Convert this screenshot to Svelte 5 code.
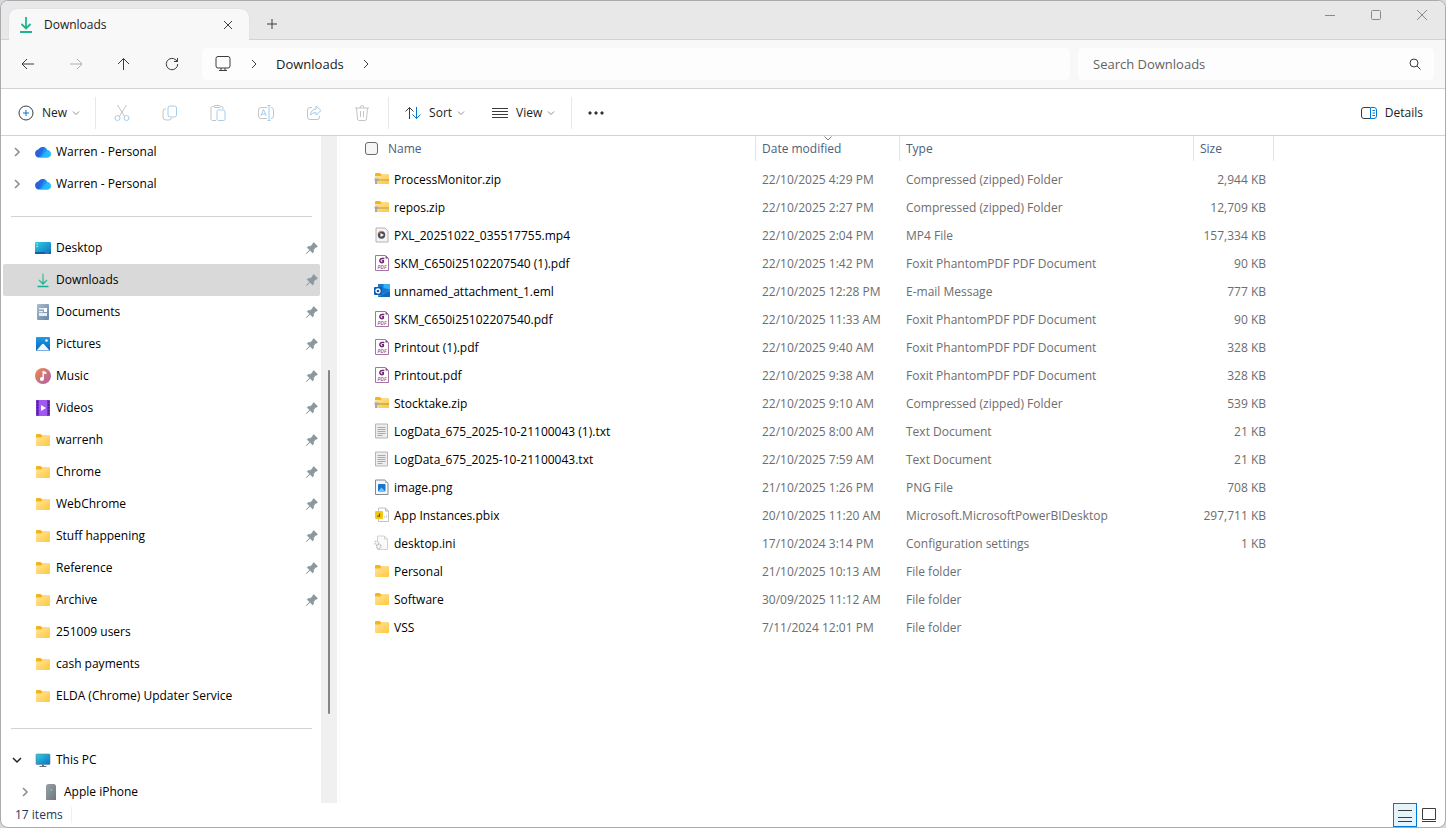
<script lang="ts">
	type Place = { label: string; icon: string; pinned?: boolean };

	const accounts: Place[] = [
		{ label: 'Warren - Personal', icon: 'cloud' },
		{ label: 'Warren - Personal', icon: 'cloud' }
	];

	const places: Place[] = [
		{ label: 'Desktop', icon: 'desktop', pinned: true },
		{ label: 'Downloads', icon: 'download', pinned: true },
		{ label: 'Documents', icon: 'documents', pinned: true },
		{ label: 'Pictures', icon: 'pictures', pinned: true },
		{ label: 'Music', icon: 'music', pinned: true },
		{ label: 'Videos', icon: 'videos', pinned: true },
		{ label: 'warrenh', icon: 'folder', pinned: true },
		{ label: 'Chrome', icon: 'folder', pinned: true },
		{ label: 'WebChrome', icon: 'folder', pinned: true },
		{ label: 'Stuff happening', icon: 'folder', pinned: true },
		{ label: 'Reference', icon: 'folder', pinned: true },
		{ label: 'Archive', icon: 'folder', pinned: true },
		{ label: '251009 users', icon: 'folder' },
		{ label: 'cash payments', icon: 'folder' },
		{ label: 'ELDA (Chrome) Updater Service', icon: 'folder' }
	];

	const pdf = 'Foxit PhantomPDF PDF Document';
	const zip = 'Compressed (zipped) Folder';

	const files = [
		{ name: 'ProcessMonitor.zip', icon: 'zip', date: '22/10/2025 4:29 PM', type: zip, size: '2,944 KB' },
		{ name: 'repos.zip', icon: 'zip', date: '22/10/2025 2:27 PM', type: zip, size: '12,709 KB' },
		{ name: 'PXL_20251022_035517755.mp4', icon: 'mp4', date: '22/10/2025 2:04 PM', type: 'MP4 File', size: '157,334 KB' },
		{ name: 'SKM_C650i25102207540 (1).pdf', icon: 'pdf', date: '22/10/2025 1:42 PM', type: pdf, size: '90 KB' },
		{ name: 'unnamed_attachment_1.eml', icon: 'eml', date: '22/10/2025 12:28 PM', type: 'E-mail Message', size: '777 KB' },
		{ name: 'SKM_C650i25102207540.pdf', icon: 'pdf', date: '22/10/2025 11:33 AM', type: pdf, size: '90 KB' },
		{ name: 'Printout (1).pdf', icon: 'pdf', date: '22/10/2025 9:40 AM', type: pdf, size: '328 KB' },
		{ name: 'Printout.pdf', icon: 'pdf', date: '22/10/2025 9:38 AM', type: pdf, size: '328 KB' },
		{ name: 'Stocktake.zip', icon: 'zip', date: '22/10/2025 9:10 AM', type: zip, size: '539 KB' },
		{ name: 'LogData_675_2025-10-21100043 (1).txt', icon: 'txt', date: '22/10/2025 8:00 AM', type: 'Text Document', size: '21 KB' },
		{ name: 'LogData_675_2025-10-21100043.txt', icon: 'txt', date: '22/10/2025 7:59 AM', type: 'Text Document', size: '21 KB' },
		{ name: 'image.png', icon: 'png', date: '21/10/2025 1:26 PM', type: 'PNG File', size: '708 KB' },
		{ name: 'App Instances.pbix', icon: 'pbix', date: '20/10/2025 11:20 AM', type: 'Microsoft.MicrosoftPowerBIDesktop', size: '297,711 KB' },
		{ name: 'desktop.ini', icon: 'ini', date: '17/10/2024 3:14 PM', type: 'Configuration settings', size: '1 KB' },
		{ name: 'Personal', icon: 'folder', date: '21/10/2025 10:13 AM', type: 'File folder', size: '' },
		{ name: 'Software', icon: 'folder', date: '30/09/2025 11:12 AM', type: 'File folder', size: '' },
		{ name: 'VSS', icon: 'folder', date: '7/11/2024 12:01 PM', type: 'File folder', size: '' }
	];

	let current = $state('Downloads');
	let search = $state('');
	let view = $state('details');
</script>

{#snippet icon(name: string)}
	<svg class="icon" viewBox="0 0 16 16" width="16" height="16" aria-hidden="true">
		{#if name === 'folder'}
			<path d="M1 3.2q0-1.2 1-1.2h3.6l1.6 1.6H14q1 0 1 1V6H1z" fill="#f5b31c" />
			<path d="M1 5.4h5.2L7.7 4H14.2q.8 0 .8.9V13q0 .9-.9.9H1.9Q1 13.9 1 13z" fill="url(#g-folder)" />
		{:else if name === 'zip'}
			<path d="M1 3q0-1 1-1h4l1.4 1.5H14q1 0 1 1V7H1z" fill="#f5b31c" />
			<path d="M1 5h5.5L8 4h6.2q.8 0 .8.8V13H1z" fill="url(#g-folder)" />
			<path d="M3 9h12" stroke="#b39a5c" stroke-width="1.2" />
			<path d="M.5 7.6h4v2.2H3V13H1V9.800H.5z" fill="#a5a9ac" />
		{:else if name === 'cloud'}
			<path d="M4 13.5a4 4 0 0 1-.6-7.900A5 5 0 0 1 12.4 6a3.8 3.8 0 0 1 .2 7.5z" fill="url(#g-cloud)" />
			<path d="M.7 11.500A4 4 0 0 1 3.4 5.6 5 5 0 0 1 10 3.4L3.5 13.400Q1.6 13.2.7 11.500z" fill="#2a5fdc" opacity=".75" />
			<path d="M5.500 13.500 12 6.600a3.600 3.600 0 0 1 3.800 4.800q-.8 2.100-3.200 2.100z" fill="#27c2fb" opacity=".8" />
		{:else if name === 'desktop'}
			<rect x="0" y="2" width="16" height="12" rx="1" fill="url(#g-screen)" />
			<path d="M0 12h16v1q0 1-1 1H1q-1 0-1-1z" fill="#13609c" />
			<path d="M1.5 4h1.300M1.5 6.500h1.300" stroke="#c3fbff" stroke-width="1.2" />
			<path d="M10.5 13h1M12.5 13h1" stroke="#9bd5ee" />
		{:else if name === 'download'}
			<path d="M8 1.5v10M4 8l4 4 4-4M2.5 14.5h11" fill="none" stroke="url(#g-down)" stroke-width="1.3" />
		{:else if name === 'documents'}
			<rect x="2" y="0" width="12" height="16" rx="1" fill="url(#g-doc)" />
			<path d="M4 4h5v1.500H4zM4 7h4v1.200H4zM4 9h8v3H4z" fill="#e5edf5" />
			<path d="M9 4h3v4H9z" fill="#fff" />
		{:else if name === 'pictures'}
			<rect x="1" y="1" width="14" height="14" rx="1" fill="url(#g-pic)" />
			<path d="M1.5 14.500 7 8.300q1-.9 2 0l5.500 6.200z" fill="#f0f8ff" />
			<circle cx="11.500" cy="4.500" r="1.200" fill="#fff" />
		{:else if name === 'music'}
			<circle cx="8" cy="8" r="8" fill="url(#g-music)" />
			<path d="M7.500 2.800 11.300 4v2.300L8.900 5.600V11H7.500z" fill="#fff" />
			<circle cx="6.900" cy="11" r="2" fill="#fff" />
		{:else if name === 'videos'}
			<rect x="1" y="0" width="14" height="16" rx="1" fill="#a05aef" />
			<path d="M1 0h3v16H2q-1 0-1-1zM12 0h2q1 0 1 1v14q0 1-1 1h-2z" fill="#7a35cf" />
			<path d="M2.500 1.500v13M13.500 1.500v13" stroke="#3f1a7c" stroke-width="1.400" stroke-dasharray="1.500 1.300" />
			<path d="M6 5v6l5-3z" fill="#fff" />
		{:else if name === 'pc'}
			<rect x="1" y="2" width="14" height="10.500" rx=".8" fill="url(#g-screen)" stroke="#5e8194" stroke-width=".6" />
			<path d="M7 12.500h2v1.500h2.500v1h-7v-1H7z" fill="#66737c" />
		{:else if name === 'phone'}
			<path d="M3 2.500Q3 0 5.500 0h5Q13 0 13 2.500V16H3z" fill="url(#g-phone)" />
			<circle cx="8.300" cy="6" r="1.100" fill="#35d2ee" />
		{:else if name === 'mp4'}
			<path d="M2 1h9l3 3v11H2z" fill="#f4f4f4" stroke="#b4b4b4" />
			<circle cx="7.500" cy="8" r="3.700" fill="#4e4c55" />
			<path d="M4.200 6.500A3.700 3.700 0 0 1 9.500 4.800" fill="none" stroke="#d9805a" stroke-width="1.200" />
			<path d="M6.500 6v4L10 8z" fill="#fff" />
		{:else if name === 'pdf'}
			<path d="M1.500.5h10l3 3v12h-13z" fill="#fff" stroke="#a377a4" />
			<path d="M11.500.5v3h3z" fill="#854a86" />
			<path d="M10.300 3.500H8A2.100 2.100 0 1 0 9.300 7.200V5.800H7.800" fill="none" stroke="#6d286e" stroke-width="1.500" />
			<text x="8" y="13.700" text-anchor="middle" font-size="5" font-weight="600" font-style="italic" fill="#8a4f8b">PDF</text>
		{:else if name === 'eml'}
			<path d="M4 1h11q1 0 1 1v11q0 1-1 1H4z" fill="#1a78d0" />
			<path d="M9.500 1H16v5.500L9.500 5z" fill="#38b0f5" />
			<path d="M4 8.500 10 11l6-4v6q0 1-1 1H4z" fill="#2ba0ea" />
			<path d="M4 14 16 8v5q0 1-1 1z" fill="#1366b8" />
			<rect x="0" y="4" width="8" height="8" rx="1" fill="#0f5bb0" />
			<circle cx="4" cy="8" r="2" fill="none" stroke="#fff" stroke-width="1.300" />
		{:else if name === 'txt'}
			<path d="M1.500 1h12v14h-12z" fill="#ededed" stroke="#b5b5b5" />
			<path d="M3.500 4.500h8M3.500 6.500h8M3.500 8.500h8M3.500 10.500h8M3.500 12.500h5" stroke="#a9a9a9" />
		{:else if name === 'png'}
			<path d="M1.500 1h9.500l3 3v11.500H1.500z" fill="#f5f6f8" stroke="#84898e" />
			<path d="M11 1v3h3z" fill="#b9bdc1" />
			<rect x="4" y="5" width="7.500" height="7.500" rx="1" fill="#1876d2" />
			<path d="m4.500 12 3-3.500 3.500 3.500z" fill="#75c2f6" />
		{:else if name === 'pbix'}
			<path d="M4.500 1h7l3 3v10.500h-10z" fill="#fff" stroke="#c2c2c2" />
			<path d="M11.500 1v3h3" fill="none" stroke="#b5b5b5" />
			<path d="M10.500 11V9M12.500 11V8" stroke="#d9d9d9" />
			<rect x="1" y="4" width="8" height="8" rx="1" fill="#f2c811" />
			<path d="M4 10V8.500M5.500 10V6.500" stroke="#6b5600" stroke-width="1.200" />
		{:else if name === 'ini'}
			<path d="M3.500 1h7l3 3v10.500h-10z" fill="#fafafa" stroke="#d0d2d3" />
			<path d="M10.500 1v3h3" fill="none" stroke="#d0d2d3" />
			<circle cx="2.800" cy="8" r="2" fill="#f3f4f5" stroke="#c3c9ce" stroke-width="1.300" stroke-dasharray="1.400 .7" />
			<circle cx="4.800" cy="11.500" r="2.200" fill="#f3f4f5" stroke="#b8bec4" stroke-width="1.300" stroke-dasharray="1.400 .7" />
		{:else if name === 'pin'}
			<path d="M9.700 2.500 13.500 6.300 12.700 7.200 12 7.100 9.700 9.400 9.600 12 8.600 12.900 6 10.300 3 13.300 2.500 13.500 2.700 13 5.700 10 3.200 7.500 4.100 6.500 6.700 6.300 8.900 4.100 8.900 3.300z" fill="#8c989f" stroke="#8c989f" stroke-width=".6" />
		{/if}
	</svg>
{/snippet}

{#snippet chevron(kind: string)}
	<svg class="chevron {kind}" viewBox="0 0 10 10" width="10" height="10" aria-hidden="true">
		{#if kind === 'right' || kind === 'closed'}
			<path d="m3 1 4 4-4 4" />
		{:else if kind === 'open'}
			<path d="m1 3 4 4 4-4" />
		{:else}
			<path d="m2 3.500 3 3 3-3" />
		{/if}
	</svg>
{/snippet}

{#snippet place(item: Place)}
	<li>
		<button class="place" class:current={item.label === current} onclick={() => (current = item.label)}>
			<span class="twisty">
				{#if item.icon === 'cloud'}{@render chevron('closed')}{/if}
			</span>
			{@render icon(item.icon)}
			<span class="label">{item.label}</span>
			{#if item.pinned}{@render icon('pin')}{/if}
		</button>
	</li>
{/snippet}

<svg class="defs" width="0" height="0" aria-hidden="true">
	<defs>
		<linearGradient id="g-folder" x1="0" y1="0" x2="1" y2="1">
			<stop offset="0" stop-color="#ffe49a" />
			<stop offset="1" stop-color="#ffc93d" />
		</linearGradient>
		<linearGradient id="g-cloud" x1="0" y1="0" x2="1" y2="0">
			<stop offset="0" stop-color="#2468e0" />
			<stop offset="1" stop-color="#18b4fb" />
		</linearGradient>
		<linearGradient id="g-screen" x1="0" y1="0" x2="1" y2="1">
			<stop offset="0" stop-color="#31cfe0" />
			<stop offset="1" stop-color="#0b6fc4" />
		</linearGradient>
		<linearGradient id="g-down" gradientUnits="userSpaceOnUse" x1="0" y1="1" x2="0" y2="16">
			<stop offset="0" stop-color="#4fc79a" />
			<stop offset="1" stop-color="#12ab98" />
		</linearGradient>
		<linearGradient id="g-doc" x1="0" y1="0" x2="1" y2="1">
			<stop offset="0" stop-color="#a9bdd0" />
			<stop offset="1" stop-color="#6684a3" />
		</linearGradient>
		<linearGradient id="g-pic" x1="0" y1="0" x2="0" y2="1">
			<stop offset="0" stop-color="#1f9ce8" />
			<stop offset="1" stop-color="#0b62bd" />
		</linearGradient>
		<linearGradient id="g-music" x1="0" y1="0" x2="1" y2="1">
			<stop offset="0" stop-color="#f08a4b" />
			<stop offset="1" stop-color="#a95fb0" />
		</linearGradient>
		<linearGradient id="g-phone" x1="0" y1="0" x2="1" y2="1">
			<stop offset="0" stop-color="#9aa1a6" />
			<stop offset="1" stop-color="#70787e" />
		</linearGradient>
	</defs>
</svg>

<div class="window">
	<header class="titlebar">
		<div class="tab">
			<svg width="16" height="16" viewBox="0 0 16 16" aria-hidden="true">
				<path d="M8 0v11M3.500 7 8 11.500 12.500 7M2 15h12" fill="none" stroke="#1fb58f" stroke-width="1.800" />
			</svg>
			<span>Downloads</span>
			<button class="plain" aria-label="Close tab">
				<svg width="10" height="10" viewBox="0 0 10 10"><path d="m1 1 8 8M9 1 1 9" /></svg>
			</button>
		</div>
		<button class="plain new-tab" aria-label="New tab">
			<svg width="12" height="12" viewBox="0 0 12 12"><path d="M6 1v10M1 6h10" /></svg>
		</button>
		<div class="controls">
			<button class="plain" aria-label="Minimize">
				<svg width="12" height="12" viewBox="0 0 12 12"><path d="M1 6.500h10" /></svg>
			</button>
			<button class="plain" aria-label="Maximize">
				<svg width="12" height="12" viewBox="0 0 12 12"><rect x="1.500" y="1.500" width="9" height="9" rx="1" /></svg>
			</button>
			<button class="plain" aria-label="Close">
				<svg width="12" height="12" viewBox="0 0 12 12"><path d="m1 1 10 10M11 1 1 11" /></svg>
			</button>
		</div>
	</header>

	<nav class="navbar" aria-label="Location">
		<div class="history">
			<button class="plain" aria-label="Back">
				<svg width="16" height="16" viewBox="0 0 16 16"><path d="M14 8H2M7 3 2 8l5 5" /></svg>
			</button>
			<button class="plain" aria-label="Forward" disabled>
				<svg width="16" height="16" viewBox="0 0 16 16"><path d="M2 8h12M9 3l5 5-5 5" /></svg>
			</button>
			<button class="plain" aria-label="Up">
				<svg width="16" height="16" viewBox="0 0 16 16"><path d="M7.500 14V2.500M2 8l5.500-5.500L13 8" /></svg>
			</button>
			<button class="plain" aria-label="Refresh">
				<svg width="16" height="16" viewBox="0 0 16 16"><path d="M13.700 8A5.700 5.700 0 1 1 12 4l1.500 1.500M13.500 2v3.500H10" /></svg>
			</button>
		</div>
		<div class="address">
			<svg width="18" height="18" viewBox="0 0 18 18" aria-hidden="true">
				<rect x="2" y="1.500" width="14" height="11.500" rx="2" />
				<path d="M7 13v2.500M11 13v2.500M5 15.500h8" />
			</svg>
			{@render chevron('right')}
			<a href="#downloads">Downloads</a>
			{@render chevron('right')}
		</div>
		<label class="search">
			<input type="text" placeholder="Search Downloads" aria-label="Search Downloads" bind:value={search} />
			<svg width="14" height="14" viewBox="0 0 14 14" aria-hidden="true">
				<circle cx="6" cy="6" r="4" />
				<path d="m9 9 3.500 3.500" />
			</svg>
		</label>
	</nav>

	<div class="toolbar" role="toolbar" aria-label="Commands">
		<button class="command new">
			<svg width="16" height="16" viewBox="0 0 16 16" aria-hidden="true">
				<circle cx="8" cy="8" r="7" />
				<path class="accent" d="M8 5v6M5 8h6" />
			</svg>
			New
			{@render chevron('small')}
		</button>
		<div class="group">
			<button class="plain" aria-label="Cut" disabled>
				<svg width="18" height="18" viewBox="0 0 18 18">
					<path d="m4.500 1 6.800 11M13.500 1 6.700 12" />
					<circle class="accent" cx="4.500" cy="14" r="2.500" />
					<circle class="accent" cx="13.500" cy="14" r="2.500" />
				</svg>
			</button>
			<button class="plain" aria-label="Copy" disabled>
				<svg width="18" height="18" viewBox="0 0 18 18">
					<path d="M5 5H4Q2 5 2 7v6q0 3 3 3h3q2 0 2.500-2" />
					<rect class="accent" x="7" y="2" width="8.500" height="11" rx="2" />
				</svg>
			</button>
			<button class="plain" aria-label="Paste" disabled>
				<svg width="18" height="18" viewBox="0 0 18 18">
					<path d="M5 2.500H3.500Q2 2.500 2 4v11q0 1.500 1.500 1.500H7M12 2.500h.5Q14 2.500 14 4v1" />
					<rect x="5" y="1.500" width="6.500" height="2" rx="1" />
					<rect class="accent" x="8" y="6" width="8" height="10.500" rx="1.500" />
				</svg>
			</button>
			<button class="plain" aria-label="Rename" disabled>
				<svg width="18" height="18" viewBox="0 0 18 18">
					<path d="M10 3.500H4q-2.500 0-2.500 2.500v6q0 2.500 2.500 2.500h6M14 3.500q2.500.3 2.500 2.500v6q0 2.200-2.500 2.500" />
					<path class="accent" d="M10.500 1.500h3M12 1.500v15M10.500 16.500h3M3.800 12l2.700-6.500L9.200 12M4.800 10h3.500" />
				</svg>
			</button>
			<button class="plain" aria-label="Share" disabled>
				<svg width="18" height="18" viewBox="0 0 18 18">
					<path d="M7 3.500H5Q2.500 3.500 2.500 6v7q0 2.500 2.500 2.500h7q2.500 0 2.500-2.500v-1" />
					<path class="accent" d="m11 2 5 4.500L11 11V8.500q-3.500 0-5.500 2.500.5-5.500 5.500-6z" />
				</svg>
			</button>
			<button class="plain" aria-label="Delete" disabled>
				<svg width="18" height="18" viewBox="0 0 18 18">
					<path d="M2 4h14M7 4q0-2.500 2-2.500T11 4M3.500 4l1 11q.2 1.500 1.700 1.500h5.600q1.500 0 1.700-1.500l1-11M7.500 7v6M10.500 7v6" />
				</svg>
			</button>
		</div>
		<div class="group menus">
			<button class="command">
				<svg width="16" height="16" viewBox="0 0 16 16" aria-hidden="true">
					<path d="M4.500 14V2.500M.5 6.500l4-4 4 4" />
					<path class="accent" d="M11.500 2v11.500M7.500 9.500l4 4 4-4" />
				</svg>
				Sort
				{@render chevron('small')}
			</button>
			<button class="command">
				<svg width="16" height="16" viewBox="0 0 16 16" aria-hidden="true">
					<path d="M0 3.500h16M0 6.500h16M0 9.500h16M0 12.500h16" />
				</svg>
				View
				{@render chevron('small')}
			</button>
		</div>
		<button class="plain more" aria-label="See more">
			<svg width="18" height="18" viewBox="0 0 18 18">
				<circle cx="3" cy="9" r="1.200" /><circle cx="9" cy="9" r="1.200" /><circle cx="15" cy="9" r="1.200" />
			</svg>
		</button>
		<button class="command details">
			<svg width="16" height="16" viewBox="0 0 16 16" aria-hidden="true">
				<path d="M9 2.500H3Q.5 2.500.5 5v6q0 2.500 2.500 2.500h6" />
				<path class="accent" d="M9.500 2.500H13q2.500 0 2.500 2.500v6q0 2.500-2.500 2.500H9.500zM11.500 5.500h2.500M11.500 8h2.500M11.500 10.500h2.500" />
			</svg>
			Details
		</button>
	</div>

	<div class="content">
		<aside class="sidebar">
			<div class="tree">
				<ul>
					{#each accounts as item}{@render place(item)}{/each}
				</ul>
				<hr />
				<ul>
					{#each places as item}{@render place(item)}{/each}
				</ul>
				<hr />
				<ul>
					<li>
						<button class="place">
							<span class="twisty">{@render chevron('open')}</span>
							{@render icon('pc')}
							<span class="label">This PC</span>
						</button>
					</li>
					<li>
						<button class="place nested">
							<span class="twisty">{@render chevron('closed')}</span>
							{@render icon('phone')}
							<span class="label">Apple iPhone</span>
						</button>
					</li>
				</ul>
			</div>
			<div class="scrollbar"><div class="thumb"></div></div>
		</aside>

		<main>
			<table>
				<colgroup>
					<col class="c-name" /><col class="c-date" /><col class="c-type" /><col class="c-size" />
				</colgroup>
				<thead>
					<tr>
						<th>
							<div class="head first">
								<input type="checkbox" aria-label="Select all items" />
								Name
							</div>
						</th>
						<th>
							<div class="head">
								<svg class="sorted" width="8" height="5" viewBox="0 0 8 5" aria-hidden="true"><path d="m.5.5 3.500 3.500L7.500.5" /></svg>
								Date modified
							</div>
						</th>
						<th><div class="head">Type</div></th>
						<th><div class="head">Size</div></th>
					</tr>
				</thead>
				<tbody>
					{#each files as file}
						<tr>
							<td><div class="file">{@render icon(file.icon)}{file.name}</div></td>
							<td>{file.date}</td>
							<td>{file.type}</td>
							<td class="size">{file.size}</td>
						</tr>
					{/each}
				</tbody>
			</table>
		</main>
	</div>

	<footer class="status">
		<span class="count">{files.length} items</span>
		<div class="views">
			<button class="plain" class:active={view === 'details'} aria-label="Details view" onclick={() => (view = 'details')}>
				<svg width="16" height="16" viewBox="0 0 16 16"><path d="M1 3.500h14M1 10.500h14M1 14.500h14" /></svg>
			</button>
			<button class="plain" class:active={view === 'large'} aria-label="Large icons view" onclick={() => (view = 'large')}>
				<svg width="16" height="16" viewBox="0 0 16 16"><path d="M1.500 12.500v-11h13v11zM1 14.500h14" /></svg>
			</button>
		</div>
	</footer>
</div>

<style>
	:global(body) {
		margin: 0;
		background: #d5d7dc;
	}

	.window {
		box-sizing: border-box;
		display: flex;
		flex-direction: column;
		height: 100vh;
		border: 1px solid #ababae;
		border-radius: 8px;
		background: #fff;
		overflow: hidden;
		font-family: 'Segoe UI', 'Open Sans', 'Noto Sans', sans-serif;
		font-size: 12px;
		line-height: 16px;
		color: #000;
	}

	.defs {
		position: absolute;
	}

	button {
		padding: 0;
		border: 0;
		background: none;
		font: inherit;
		color: inherit;
	}

	svg {
		flex: none;
	}

	.plain,
	.command {
		display: flex;
		align-items: center;
		justify-content: center;
	}

	.plain svg,
	.command > svg,
	.address svg,
	.search svg,
	.sorted {
		fill: none;
		stroke: #3c3c3c;
	}

	/* title bar */
	.titlebar {
		display: flex;
		height: 38px;
		padding-left: 8px;
		border-bottom: 1px solid #d3d3d3;
		background: #e8e8e8;
	}

	/* one pixel taller than the bar, so that it hides the line below */
	.tab {
		display: flex;
		align-items: center;
		box-sizing: border-box;
		width: 240px;
		height: 31px;
		margin-top: 8px;
		padding: 0 5px 0 9px;
		gap: 10px;
		border-radius: 8px 8px 0 0;
		background: #f8f8f8;
		box-shadow: 0 0 1px #c4c4c4;
		clip-path: inset(-2px -2px 0 -2px);
		font-weight: 500;
		color: #1b1b1b;
	}

	.tab span {
		flex: 1;
	}

	.tab .plain {
		width: 32px;
		height: 24px;
	}

	.new-tab {
		width: 46px;
		margin-top: 8px;
	}

	.controls {
		display: flex;
		height: 28px;
		margin-left: auto;
	}

	.controls .plain {
		width: 46px;
	}

	.controls svg {
		stroke: #8a8a8a;
	}

	/* navigation */
	.navbar {
		display: flex;
		align-items: center;
		height: 48px;
		padding: 0 11px 0 3px;
		border-bottom: 1px solid #d3d3d3;
		background: #f8f8f8;
		font-size: 13px;
	}

	.history {
		display: flex;
		margin-right: 6px;
	}

	.history .plain {
		width: 48px;
		height: 32px;
	}

	.history .plain:disabled svg {
		stroke: #b0b0b0;
	}

	.address,
	.search {
		display: flex;
		align-items: center;
		box-sizing: border-box;
		height: 32px;
		border-radius: 5px;
		background: #fdfdfd;
	}

	.address {
		flex: 1;
		gap: 17px;
		margin-right: 8px;
		padding: 0 12px;
	}

	.address a {
		color: #1b1b1b;
		text-decoration: none;
	}

	.search {
		width: 25%;
		max-width: 356px;
		padding: 0 12px 0 15px;
	}

	.search input {
		flex: 1;
		min-width: 0;
		padding: 0;
		border: 0;
		outline: 0;
		background: none;
		font: inherit;
	}

	.search input::placeholder {
		color: #636363;
		opacity: 1;
	}

	.chevron {
		fill: none;
		stroke: #3c3c3c;
	}

	.command > .chevron {
		margin-left: -4px;
		stroke: #8f8f8f;
	}

	.chevron.closed {
		stroke: #8a8a8a;
		stroke-width: 1.5;
	}

	.chevron.open {
		stroke: #222;
		stroke-width: 1.5;
	}

	/* commands */
	.toolbar {
		display: flex;
		align-items: center;
		box-sizing: border-box;
		height: 47px;
		padding: 2px 22px 0 17px;
		border-bottom: 1px solid #d3d3d3;
		color: #1b1b1b;
	}

	.command {
		gap: 8px;
		height: 32px;
	}

	.command.new {
		margin-right: 14px;
	}

	.group {
		display: flex;
		align-items: center;
		height: 32px;
		padding: 0 2px;
		border-left: 1px solid #e8e8e8;
	}

	.group .plain {
		width: 48px;
		height: 32px;
	}

	.group.menus {
		padding-left: 3px;
	}

	.group .command {
		padding: 0 13px;
	}

	.plain:disabled svg {
		stroke: #c4c4c4;
	}

	.toolbar .accent {
		stroke: #0078d4;
	}

	.toolbar .plain:disabled .accent {
		stroke: #a2cdf0;
	}

	.more {
		width: 48px;
		height: 32px;
		border-left: 1px solid #e8e8e8;
	}

	.more svg {
		fill: #1b1b1b;
	}

	.details {
		margin-left: auto;
	}

	/* content */
	.content {
		display: flex;
		flex: 1;
		min-height: 0;
	}

	.sidebar {
		display: flex;
		flex: none;
		width: 336px;
		padding-right: 2px;
		border-right: 1px solid #f8f8f8;
	}

	.tree {
		flex: 1;
		overflow: hidden;
	}

	ul {
		margin: 0;
		padding: 0;
		list-style: none;
	}

	hr {
		margin: 16px 9px 15px 10px;
		border: 0;
		border-top: 1px solid #d3d3d3;
	}

	.place {
		display: flex;
		align-items: center;
		box-sizing: border-box;
		width: calc(100% - 3px);
		height: 32px;
		margin-left: 2px;
		padding-left: 9px;
		gap: 5px;
		border-radius: 2px;
		text-align: left;
	}

	.place.current {
		background: #d9d9d9;
	}

	.place.nested {
		padding-left: 17px;
	}

	.twisty {
		display: flex;
		width: 18px;
	}

	.label {
		flex: 1;
	}

	.scrollbar {
		display: flex;
		flex-direction: column;
		align-items: center;
		width: 16px;
		background: #f0f0f0;
	}

	.scrollbar::before {
		content: '';
		flex: 234;
	}

	.scrollbar::after {
		content: '';
		flex: 89;
	}

	.thumb {
		flex: 344;
		width: 2px;
		border-radius: 1px;
		background: #858585;
	}

	main {
		flex: 1;
		overflow: hidden;
	}

	table {
		table-layout: fixed;
		width: 934px;
		border-collapse: collapse;
	}

	.c-name {
		width: 416px;
	}

	.c-date {
		width: 144px;
	}

	.c-type {
		width: 294px;
	}

	.c-size {
		width: 80px;
	}

	th {
		padding: 0 0 5px;
		font-weight: 400;
		text-align: left;
		color: #4c607a;
	}

	.head {
		position: relative;
		display: flex;
		align-items: center;
		box-sizing: border-box;
		height: 25px;
		padding-left: 6px;
		border-right: 1px solid #e5e5e5;
	}

	.head.first {
		gap: 10px;
		padding-left: 25px;
	}

	.head input {
		appearance: none;
		box-sizing: border-box;
		width: 13px;
		height: 13px;
		margin: 0;
		border: 1px solid #6b6b6b;
		border-radius: 3px;
		background: #f6f6f6;
	}

	.sorted {
		position: absolute;
		top: 0;
		left: calc(50% - 4px);
		stroke: #7a7a7a;
	}

	td {
		height: 28px;
		padding: 0 6px;
		white-space: nowrap;
		color: #6d6d6d;
	}

	td.size {
		padding-right: 8px;
		text-align: right;
	}

	.file {
		display: flex;
		align-items: center;
		gap: 4px;
		padding-left: 28px;
		color: #000;
	}

	.file .icon {
		margin-bottom: 2px;
	}

	/* status bar */
	.status {
		display: flex;
		align-items: center;
		justify-content: space-between;
		height: 24px;
		padding: 0 4px 0 14px;
		color: #1e395b;
	}

	.count {
		padding-right: 8px;
		border-right: 1px solid #f0f0f0;
	}

	.views {
		display: flex;
	}

	.views .plain {
		box-sizing: border-box;
		width: 24px;
		height: 24px;
		border: 1px solid transparent;
	}

	.views .plain.active {
		border-color: #0078d4;
		background: #e5f3fb;
	}
</style>
